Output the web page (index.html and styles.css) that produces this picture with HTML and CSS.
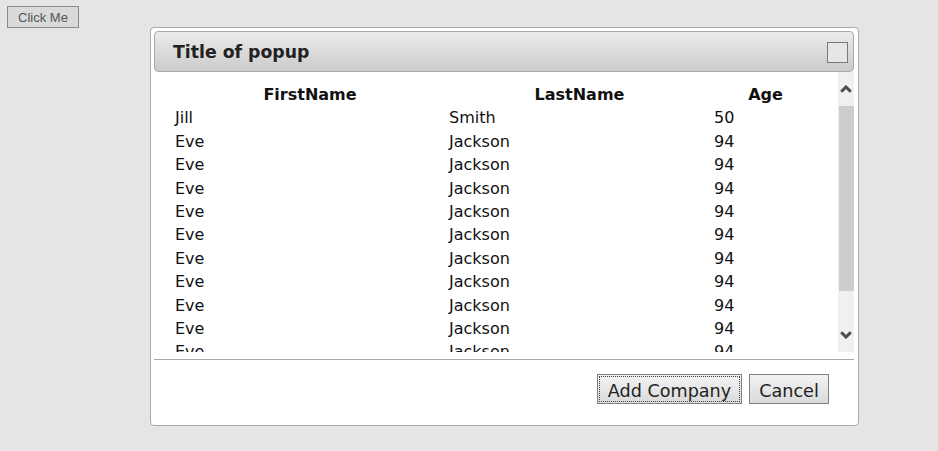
FILE: index.html
```html
<!DOCTYPE html>
<html>
<head>
<meta charset="utf-8">
<link rel="stylesheet" href="styles.css">
</head>
<body>
<button class="click-btn">Click Me</button>

<div class="dialog">
  <div class="titlebar">
    <span class="title">Title of popup</span>
    <button class="close-btn" aria-label="close"></button>
  </div>
  <div class="content">
    <div class="table-wrap">
      <table class="grid">
        <colgroup><col class="c1"><col class="c2"><col class="c3"></colgroup>
        <thead>
          <tr><th>FirstName</th><th>LastName</th><th>Age</th></tr>
        </thead>
        <tbody>
          <tr><td>Jill</td><td>Smith</td><td>50</td></tr>
          <tr><td>Eve</td><td>Jackson</td><td>94</td></tr>
          <tr><td>Eve</td><td>Jackson</td><td>94</td></tr>
          <tr><td>Eve</td><td>Jackson</td><td>94</td></tr>
          <tr><td>Eve</td><td>Jackson</td><td>94</td></tr>
          <tr><td>Eve</td><td>Jackson</td><td>94</td></tr>
          <tr><td>Eve</td><td>Jackson</td><td>94</td></tr>
          <tr><td>Eve</td><td>Jackson</td><td>94</td></tr>
          <tr><td>Eve</td><td>Jackson</td><td>94</td></tr>
          <tr><td>Eve</td><td>Jackson</td><td>94</td></tr>
          <tr><td>Eve</td><td>Jackson</td><td>94</td></tr>
          <tr><td>Eve</td><td>Jackson</td><td>94</td></tr>
          <tr><td>Eve</td><td>Jackson</td><td>94</td></tr>
        </tbody>
      </table>
    </div>
    <div class="scrollbar">
      <div class="arrow">
        <svg width="12" height="8" viewBox="0 0 12 8"><path d="M1.2 6.8 L6 2 L10.8 6.8" fill="none" stroke="#4d4d4d" stroke-width="3"/></svg>
      </div>
      <div class="thumb"></div>
      <div class="track-rest"></div>
      <div class="arrow">
        <svg width="12" height="8" viewBox="0 0 12 8"><path d="M1.2 1.2 L6 6 L10.8 1.2" fill="none" stroke="#4d4d4d" stroke-width="3"/></svg>
      </div>
    </div>
  </div>
  <div class="buttonpane">
    <button class="dlg-btn btn-add focused">Add Company</button>
    <button class="dlg-btn btn-cancel">Cancel</button>
  </div>
</div>
</body>
</html>
```

FILE: styles.css
```css
html, body {
  margin: 0;
  padding: 0;
}
body {
  background: #e5e5e5;
  padding: 6px 7px;
  height: 451px;
  box-sizing: border-box;
  font-family: "DejaVu Sans", Verdana, sans-serif;
}

.click-btn {
  display: block;
  width: 72px;
  height: 22px;
  padding: 0;
  margin: 0;
  border: 1px solid #8a8a8a;
  background: #dadada;
  color: #555;
  font-family: "Liberation Sans", Arial, sans-serif;
  font-size: 13px;
}

.dialog {
  position: absolute;
  left: 150px;
  top: 27px;
  width: 709px;
  height: 399px;
  box-sizing: border-box;
  border: 1px solid #a9a9a9;
  border-radius: 4px;
  background: #fff;
  padding: 3px 4px 3px 3px;
  display: flex;
  flex-direction: column;
}

.titlebar {
  height: 41px;
  flex: none;
  box-sizing: border-box;
  border: 1px solid #aaa;
  border-radius: 4px;
  background: linear-gradient(#ebebeb, #cbcbcb);
  display: flex;
  align-items: center;
  justify-content: space-between;
  padding: 1px 5px 0 18px;
}
.title {
  font-weight: bold;
  font-size: 17.3px;
  color: #222;
}
.close-btn {
  width: 21px;
  height: 21px;
  margin: 1px 0 0 0;
  padding: 0;
  border: 1px solid #7a7a7a;
  background: #e6e6e6;
}

.content {
  height: 280px;
  flex: none;
  display: flex;
}
.table-wrap {
  flex: 1;
  overflow: hidden;
  padding: 11px 0 0 19px;
}
.grid {
  border-collapse: collapse;
  width: 646px;
  table-layout: fixed;
  font-size: 16px;
  color: #111;
}
.c1 { width: 274px; }
.c2 { width: 265px; }
.c3 { width: 107px; }
.grid th, .grid td {
  padding: 0 2px;
  height: 23.4px;
  line-height: 23.4px;
  white-space: nowrap;
}
.grid th {
  text-align: center;
  font-weight: bold;
}
.grid td {
  text-align: left;
}

.scrollbar {
  width: 16px;
  background: #f0f0f0;
  display: flex;
  flex-direction: column;
}
.arrow {
  height: 34px;
  display: flex;
  align-items: center;
  justify-content: center;
}
.thumb {
  height: 185px;
  margin: 0 0 0 1px;
  background: #cdcdcd;
}
.track-rest {
  flex: 1;
}

.buttonpane {
  margin-top: 7px;
  border-top: 1px solid #a9a9a9;
  display: flex;
  justify-content: flex-end;
  gap: 7px;
  padding: 14px 25px 0 0;
}
.dlg-btn {
  height: 30px;
  padding: 3px 0 0;
  border: 1px solid #808080;
  background: linear-gradient(#f3f3f3, #dadada);
  font-family: "DejaVu Sans", Verdana, sans-serif;
  font-size: 17.6px;
  color: #222;
  text-align: center;
}
.btn-add { width: 145px; }
.btn-cancel { width: 80px; }
.dlg-btn.focused {
  outline: 1px dotted #444;
  outline-offset: -3px;
}
```
